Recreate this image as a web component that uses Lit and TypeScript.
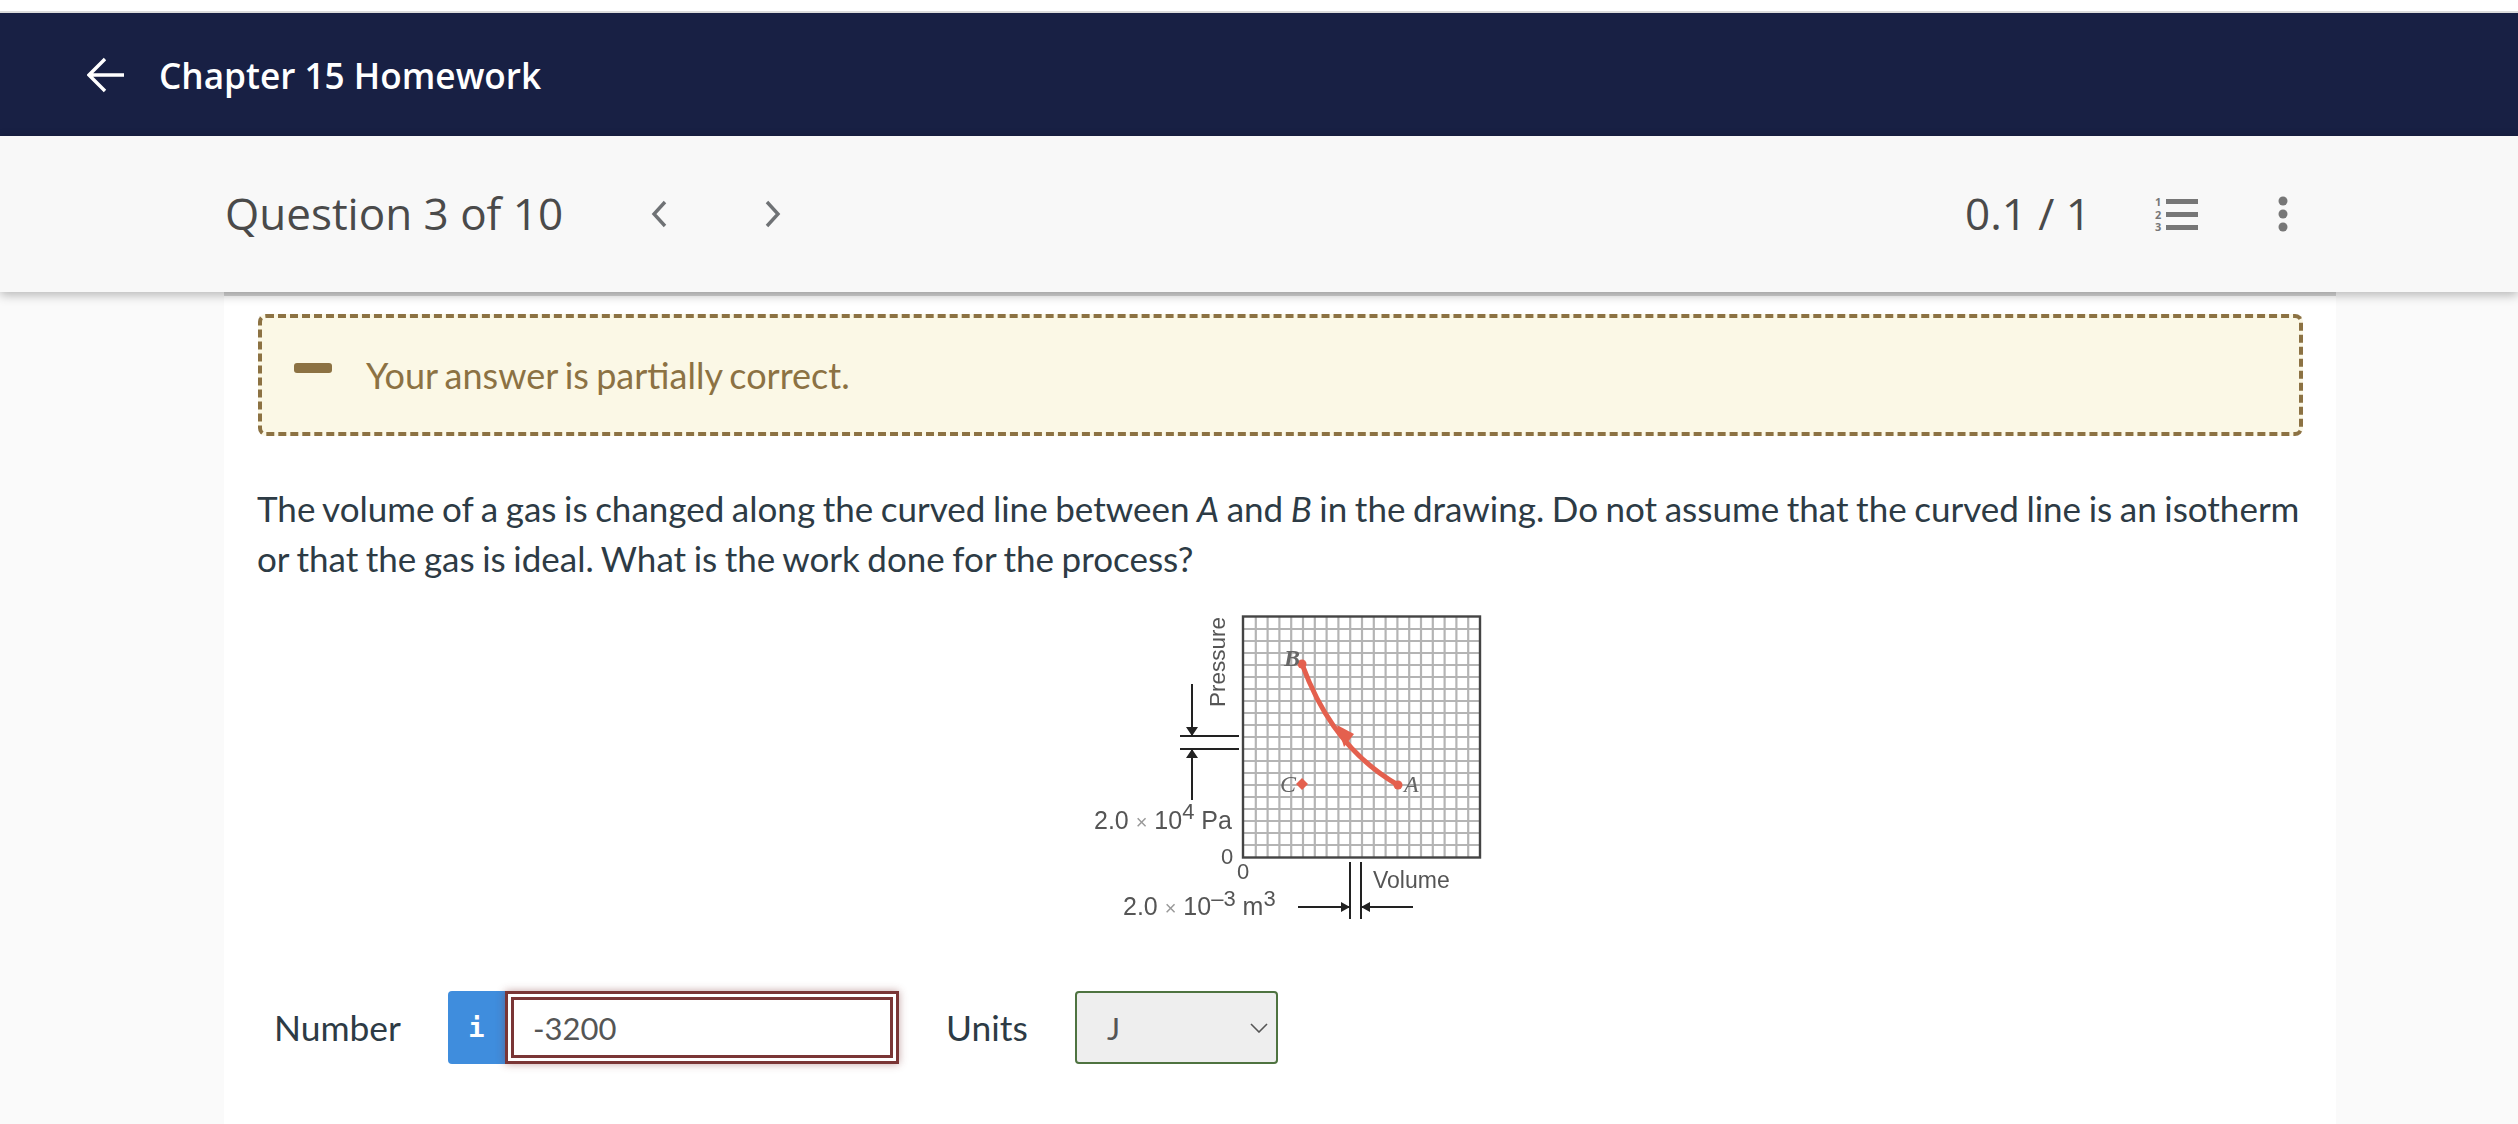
import { LitElement, html, css, svg } from "lit";
import { customElement } from "lit/decorators.js";

const gridLines = () => {
  const out = [];
  for (let i = 1; i < 20; i++) {
    const x = 1243 + i * 11.8;
    const y = 617 + i * 12;
    out.push(svg`<line x1=${x} y1="617" x2=${x} y2="857" class="g"></line>`);
    out.push(svg`<line x1="1243" y1=${y} x2="1479" y2=${y} class="g"></line>`);
  }
  return out;
};

@customElement("app-root")
export class AppRoot extends LitElement {
  static styles = css`
    :host { display: block; width: 2518px; height: 1124px; overflow: hidden; background: #fafafa; font-family: "Lato", sans-serif; color: #2d3b45; }
    .top { height: 13px; background: #fff; box-sizing: border-box; border-bottom: 2px solid #dcdcdc; }
    .hdr { height: 123px; background: #182044; color: #fff; display: flex; align-items: center; padding-left: 87px; gap: 35px; font-family: "Open Sans", sans-serif; font-size: 35.2px; font-weight: 600; }
    .hdr svg { display: block; }
    .bar { position: relative; z-index: 2; height: 156px; background: #f8f8f8; box-shadow: 0 3px 10px rgba(0,0,0,.28); display: flex; align-items: center; padding: 0 230px 2px 225px; box-sizing: border-box; color: #4a4a4a; font-family: "Open Sans", sans-serif; font-size: 44px; }
    .chev { display: block; margin: 2px 0 0 88px; }
    .chev + .chev { margin-left: 96px; }
    .sp { flex: 1; }
    .icon { display: block; margin: 2px 0 0 63px; overflow: visible; }
    .dots { display: block; margin: 2px 0 0 80px; }
    .num { font-family: "Open Sans", sans-serif; font-size: 11px; font-weight: 700; fill: #777; }
    .panel { margin: 0 182px 0 224px; height: 832px; background: #fff; border-top: 4px solid #d6d6d6; padding: 18px 33px 0 34px; box-sizing: border-box; }
    .alert { height: 122px; box-sizing: border-box; border: 4px dashed #8c7243; border-radius: 8px; background: #fbf8e6; display: flex; align-items: center; padding-left: 32px; gap: 34px; color: #8c7243; font-size: 36px; word-spacing: -2px; }
    .minus { width: 38px; height: 10px; border-radius: 3px; background: #8c7243; margin-top: -14px; }
    .q { margin: 47px 0 0 -1px; font-size: 35px; line-height: 50px; word-spacing: -1.4px; }
    .fig { display: block; margin: 22px auto 0; filter: blur(0.5px); }
    .g { stroke: #b4b4b4; stroke-width: 2.2; }
    .row { display: flex; align-items: center; margin-top: 66px; font-size: 35.4px; }
    .lbl { margin-left: 16px; width: 174px; }
    .info { width: 57px; height: 73px; box-sizing: border-box; background: #3f8ddd; border-radius: 4px 0 0 4px; color: #fff; display: flex; align-items: center; justify-content: center; font-family: "DejaVu Sans Mono", monospace; font-weight: 700; font-size: 27px; }
    .inp { width: 394px; height: 73px; box-sizing: border-box; border: 3px solid #7a3535; padding: 3px; background: #fff; box-shadow: 0 0 8px rgba(122,53,53,.45); }
    .inp div { height: 100%; box-sizing: border-box; border: 3px solid #7a3535; padding-left: 19px; display: flex; align-items: center; font-size: 31px; color: #555; }
    .units { margin-left: 47px; width: 129px; }
    .sel { width: 203px; height: 73px; box-sizing: border-box; background: #eee; border: 2px solid #4e7340; border-radius: 4px; display: flex; align-items: center; justify-content: space-between; padding: 0 8px 0 30px; font-size: 31px; color: #555; }
    .t { font-family: "Liberation Sans", sans-serif; fill: #555; font-size: 25px; }
    .it { font-family: "Liberation Serif", serif; font-style: italic; font-size: 24px; fill: #666; }
  `;

  render() {
    return html`
      <div class="top"></div>
      <header class="hdr">
        <svg width="37" height="36" viewBox="0 0 37 36" fill="none" stroke="#fff" stroke-width="3.4"><path d="M37 18H3M18 2 2 18l16 16"/></svg>
        <span>Chapter 15 Homework</span>
      </header>
      <nav class="bar">
        <span>Question 3 of 10</span>
        <svg class="chev" width="17" height="28" viewBox="0 0 17 28" fill="none" stroke="#6f7275" stroke-width="3.4"><path d="M14 2 3 14l11 12"/></svg>
        <svg class="chev" width="17" height="28" viewBox="0 0 17 28" fill="none" stroke="#6f7275" stroke-width="3.4"><path d="M3 2l11 12L3 26"/></svg>
        <span class="sp"></span>
        <span>0.1 / 1</span>
        <svg class="icon" width="44" height="36" viewBox="0 0 44 36" fill="#777"><rect x="12" y="3" width="32" height="5"/><rect x="12" y="16" width="32" height="5"/><rect x="12" y="29" width="32" height="5"/><text class="num" x="1" y="9.500">1</text><text class="num" x="1" y="22.500">2</text><text class="num" x="1" y="35">3</text></svg>
        <svg class="dots" width="10" height="36" viewBox="0 0 10 36" fill="#777"><circle cx="5" cy="5" r="4.5"/><circle cx="5" cy="18" r="4.5"/><circle cx="5" cy="31" r="4.5"/></svg>
      </nav>
      <main class="panel">
        <div class="alert"><span class="minus"></span><span>Your answer is partially correct.</span></div>
        <p class="q">The volume of a gas is changed along the curved line between <i>A</i> and <i>B</i> in the drawing. Do not assume that the curved line is an isotherm or that the gas is ideal. What is the work done for the process?</p>
        <svg class="fig" width="440" height="320" viewBox="1060 605 440 320">
          ${gridLines()}
          <rect x="1242" y="616.500" width="237" height="241" fill="none" stroke="#444" stroke-width="2.4"/>
          <path d="M1301 664C1315 702 1340 752 1397 785" fill="none" stroke="#e4604e" stroke-width="5"/>
          <path d="M1336 725l17 9-10 13z" fill="#e4604e"/>
          <circle cx="1301" cy="664" r="4.500" fill="#e4604e"/><circle cx="1397" cy="785" r="4.500" fill="#e4604e"/>
          <path d="M1301 778l6 6-6 6-6-6z" fill="#e4604e"/>
          <text class="it" x="1283" y="666" style="font-weight:700">B</text>
          <text class="it" x="1279" y="792">C</text>
          <text class="it" x="1403" y="792">A</text>
          <g stroke="#222" stroke-width="2" fill="none">
            <path d="M1179 736h59M1179 749h59M1191 684v52M1191 749v51"/>
            <path d="M1349 862v57M1360 862v57M1297 907h52M1360 907h52"/>
          </g>
          <path d="M1185 727h12l-6 9zM1185 758h12l-6-9zM1340 902v10l9-5zM1369 902v10l-9-5z" fill="#222"/>
          <text class="t" x="1093" y="829">2.0 <tspan font-size="20" fill="#999">×</tspan> 10<tspan dy="-10" font-size="22">4</tspan><tspan dy="10"> Pa</tspan></text>
          <text class="t" x="1220" y="864" style="font-size:22px">0</text>
          <text class="t" x="1236" y="879" style="font-size:22px">0</text>
          <text class="t" x="1372" y="888" style="font-size:23px">Volume</text>
          <text class="t" x="1122" y="915">2.0 <tspan font-size="20" fill="#999">×</tspan> 10<tspan dy="-9" font-size="22">–3</tspan><tspan dy="9"> m</tspan><tspan dy="-9" font-size="22">3</tspan></text>
          <text class="t" transform="translate(1224 707) rotate(-90)" style="font-size:22.500px">Pressure</text>
        </svg>
        <div class="row">
          <span class="lbl">Number</span>
          <span class="info">i</span>
          <div class="inp"><div>-3200</div></div>
          <span class="units">Units</span>
          <div class="sel"><span>J</span>
            <svg width="18" height="10" viewBox="0 0 18 10" fill="none" stroke="#555" stroke-width="1.600"><path d="M1 1l8 8 8-8"/></svg>
          </div>
        </div>
      </main>
    `;
  }
}
